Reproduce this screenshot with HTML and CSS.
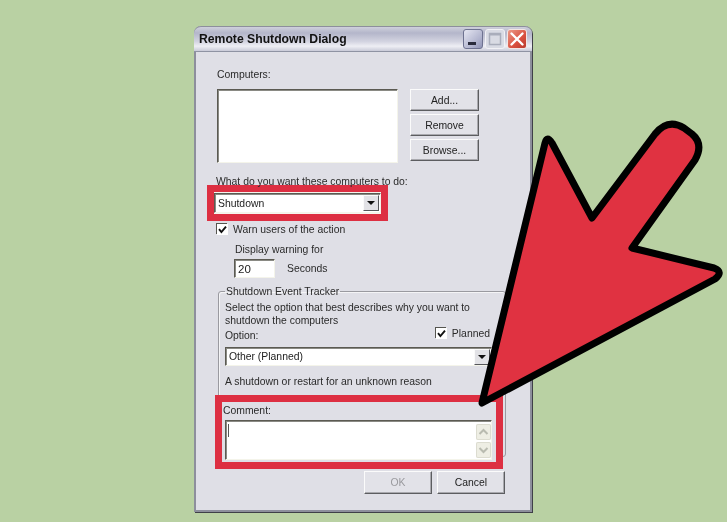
FILE: index.html
```html
<!DOCTYPE html>
<html lang="en">
<head>
<meta charset="utf-8">
<title>Remote Shutdown Dialog</title>
<link rel="stylesheet" href="styles.css">
</head>
<body>
<div class="desktop">
  <section class="dialog">
    <header class="titlebar">
      <h1 class="title">Remote Shutdown Dialog</h1>
      <div class="controls">
        <span class="ctl ctl-min"><svg viewBox="0 0 20 20" width="20" height="20"><rect x="5" y="13" width="8" height="3" fill="#2a2c3c"/></svg></span>
        <span class="ctl ctl-max"><svg viewBox="0 0 20 20" width="20" height="20"><rect x="4.5" y="4.5" width="11" height="11" fill="none" stroke="#a9adbb" stroke-width="1.5"/><rect x="4" y="4" width="12" height="2.5" fill="#a9adbb"/></svg></span>
        <span class="ctl ctl-close"><svg viewBox="0 0 20 20" width="20" height="20"><path d="M4.5 4.5 15.5 15.5M15.5 4.5 4.5 15.5" stroke="#fff" stroke-width="2.4" stroke-linecap="round"/></svg></span>
      </div>
    </header>
    <div class="body">
      <div class="label computers-label">Computers:</div>
      <div class="computers">
        <div class="listbox sunken"></div>
        <div class="side-buttons">
          <button class="btn">Add...</button>
          <button class="btn">Remove</button>
          <button class="btn">Browse...</button>
        </div>
      </div>
      <div class="label todo-label">What do you want these computers to do:</div>
      <div class="hl hl-action">
        <div class="combo sunken action-combo"><span class="combo-text">Shutdown</span><span class="combo-arrow"><i class="tri"></i></span></div>
      </div>
      <label class="check warn"><span class="box"><svg viewBox="0 0 11 11" width="11" height="11"><path d="M2 5.2 4.4 8 9 2.6" fill="none" stroke="#111" stroke-width="1.9"/></svg></span>Warn users of the action</label>
      <div class="label display-label">Display warning for</div>
      <div class="seconds">
        <div class="num sunken">20</div>
        <span class="label">Seconds</span>
      </div>
      <fieldset class="group">
        <legend class="legend">Shutdown Event Tracker</legend>
        <p class="desc">Select the option that best describes why you want to<br>shutdown the computers</p>
        <div class="option-row">
          <span class="label">Option:</span>
          <label class="check planned"><span class="box"><svg viewBox="0 0 11 11" width="11" height="11"><path d="M2 5.2 4.4 8 9 2.6" fill="none" stroke="#111" stroke-width="1.9"/></svg></span>Planned</label>
        </div>
        <div class="combo sunken option-combo"><span class="combo-text">Other (Planned)</span><span class="combo-arrow"><i class="tri"></i></span></div>
        <p class="reason">A shutdown or restart for an unknown reason</p>
        <div class="hl hl-comment">
          <div class="label comment-label">Comment:</div>
          <div class="comment sunken">
            <i class="caret"></i>
            <div class="scroll">
              <span class="sb"><svg viewBox="0 0 15 16" width="15" height="16"><path d="M3.5 10 7.5 6 11.5 10" fill="none" stroke="#b9bbb0" stroke-width="2"/></svg></span>
              <span class="sb"><svg viewBox="0 0 15 16" width="15" height="16"><path d="M3.5 6 7.5 10 11.5 6" fill="none" stroke="#b9bbb0" stroke-width="2"/></svg></span>
            </div>
          </div>
        </div>
      </fieldset>
      <div class="actions">
        <button class="btn btn-disabled">OK</button>
        <button class="btn">Cancel</button>
      </div>
    </div>
  </section>
  <svg class="arrow" viewBox="0 0 727 522" width="727" height="522" aria-hidden="true">
    <path d="M482 403 L545 143 Q547 135 552 143 L592 218 L655 134 Q668 118 684 128 L692 134 Q704 144 695 160 L632 248 L714 268 Q724 272 715 279 Z" fill="#e03241" stroke="#000" stroke-width="7" stroke-linejoin="round"/>
  </svg>
</div>
</body>
</html>
```
FILE: styles.css
```css
* { box-sizing: border-box; }
html, body { margin: 0; padding: 0; }
body { width: 727px; height: 522px; overflow: hidden; background: #b9d1a3; font-family: "Liberation Sans", Arial, sans-serif; font-size: 10.4px; color: #222; }
.desktop { position: relative; width: 727px; height: 522px; padding: 26px 0 0 194px; }
.dialog { width: 338px; height: 486px; background: #dfdfe6; border: 2px solid #8d8f9c; border-top: 0; border-radius: 7px 7px 0 0; box-shadow: 1px 1px 0 #3f4048; filter: blur(.3px); }
.titlebar { height: 26px; margin: 0 -2px; padding: 0 5px 0 5px; display: flex; align-items: center; justify-content: space-between; border-radius: 7px 7px 0 0; border-top: 1px solid #8d8f9c; border-bottom: 1px solid #8f93a3; background: linear-gradient(#cfd0dc 0, #b4b6ca 25%, #d2d3e0 60%, #eeeef4 80%, #c9cad8 100%); }
.title { margin: 0; font-size: 12.2px; font-weight: 700; color: #111; font-family: "Liberation Sans", Arial, sans-serif; letter-spacing: 0; }
.controls { display: flex; gap: 2px; }
.ctl { width: 20px; height: 20px; display: block; border-radius: 3px; border: 1px solid #fff; }
.ctl svg { display: block; margin: -1px; }
.ctl-min { background: linear-gradient(135deg, #e6e7f2, #aeb1cc 70%, #8e92b4); border-color: #6e7290; }
.ctl-max { background: #d9dbe4; border-color: #f2f2f6; }
.ctl-close { background: linear-gradient(135deg, #ec9a88, #d9503f 60%, #b93a2e); border-color: #f2e6e4; }
.body { padding: 15px 0 0 21px; position: relative; height: 458px; }
.label { line-height: 13px; color: #2a2a2a; }
.sunken { background: #fff; border: 1px solid; border-color: #5b5a52 #f4f4ea #f4f4ea #5b5a52; box-shadow: inset 1px 1px 0 #8a8a84; }
.computers-label { margin-top: 1px; }
.computers { display: flex; margin-top: 8px; }
.listbox { width: 181px; height: 74px; }
.side-buttons { margin-left: 12px; display: flex; flex-direction: column; gap: 3px; }
.btn { display: block; width: 69px; height: 22px; padding: 0; font: 10.4px "Liberation Sans", Arial, sans-serif; color: #222; background: #e2e2e8; border: 1px solid; border-color: #fbfbfb #5c5d60 #5c5d60 #fbfbfb; box-shadow: inset -1px -1px 0 #a9a9ae; }
.todo-label { position: relative; z-index: 1; margin-top: 12px; margin-left: -1px; }
.hl { border: 7px solid #dd2f42; }
.hl-action { width: 181px; height: 36px; margin: -3px 0 0 -10px; padding: 1px 0 0; background: #f5f5ee; }
.combo { display: flex; align-items: center; justify-content: space-between; height: 20px; padding: 0 1px 0 3px; }
.combo-text { color: #222; }
.combo-arrow { width: 16px; height: 16px; display: flex; align-items: center; justify-content: center; background: #e2e2e6; border: 1px solid; border-color: #fafafa #55565a #55565a #fafafa; }
.tri { width: 0; height: 0; border: 4px solid transparent; border-top: 4px solid #111; border-bottom: 0; }
.check { display: flex; align-items: center; color: #2a2a2a; line-height: 13px; }
.box { width: 11px; height: 11px; margin-right: 5px; background: #fff; box-shadow: -1px -1px 0 #55554f; flex: none; }
.box svg { display: block; }
.warn { margin-top: 2px; }
.display-label { margin: 7px 0 0 18px; }
.seconds { display: flex; align-items: center; margin: 3px 0 0 17px; }
.num { width: 41px; height: 19px; padding: 2px 0 0 3px; font-size: 11.5px; line-height: 14px; margin-right: 12px; color: #222; }
.group { position: relative; margin: 7px 0 0 1px; padding: 0 0 0 6px; width: 288px; height: 172px; border: 1px solid #9a9aa0; border-radius: 3px; box-shadow: inset 1px 1px 0 #f4f4f6; min-width: 0; }
.legend { padding: 0 1px; margin-left: 0; line-height: 13px; color: #2a2a2a; }
.desc { margin: 3px 0 0; line-height: 13px; color: #2a2a2a; }
.option-row { display: flex; justify-content: space-between; width: 265px; margin-top: 2px; height: 13px; }
.planned { margin: -4px 0 0; }
.option-combo { width: 267px; height: 19px; margin-top: 5px; }
.reason { margin: 9px 0 0; line-height: 13px; color: #2a2a2a; }
.hl-comment { width: 288px; height: 74px; margin: 7px 0 0 -10px; padding: 1px 5px 0 0; background: #dfdfe6; }
.comment-label { margin: 1px 0 0 1px; }
.comment { position: relative; display: flex; justify-content: flex-end; width: 267px; height: 40px; margin: 3px 0 0 3px; padding: 3px 0 0; }
.caret { position: absolute; left: 2px; top: 3px; width: 1px; height: 13px; background: #555; }
.scroll { display: flex; flex-direction: column; gap: 2px; }
.sb { display: block; width: 15px; height: 16px; background: #eeeee4; border-radius: 2px; box-shadow: inset 0 0 0 1px #dcdcd0; }
.sb svg { display: block; }
.actions { position: absolute; top: 419px; left: 168px; display: flex; gap: 5px; }
.actions .btn { height: 23px; width: 68px; }
.btn-disabled { color: #9a9a9e; }
.arrow { position: absolute; left: 0; top: 0; }
```
